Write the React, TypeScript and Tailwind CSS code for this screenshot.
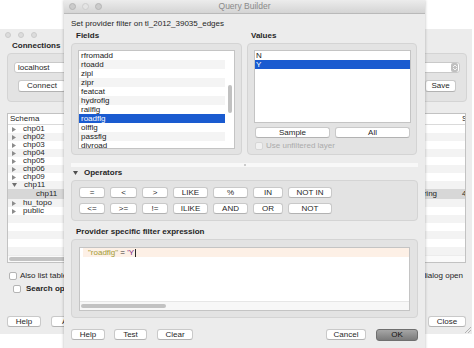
import type { ReactNode } from "react";

function Light({ tone }: { tone: "dark" | "light" | "bg" }) {
  const cls =
    tone === "dark"
      ? "w-[7px] h-[7px] rounded-full bg-[#cbcbcb] border border-[#b5b5b5]"
      : tone === "light"
      ? "w-[7px] h-[7px] rounded-full bg-[#e4e4e4] border border-[#cdcdcd]"
      : "w-[6px] h-[6px] rounded-full bg-[#dcdcdc] border border-[#cbcbcb]";
  return <div className={cls} />;
}

function Btn({ children, className = "" }: { children: ReactNode; className?: string }) {
  return (
    <div
      className={`h-[11px] shrink-0 flex items-center justify-center rounded-[3px] border border-[#c9c9c9] border-b-[#b2b2b2] bg-white text-[8px] leading-none text-[#1f1f1f] ${className}`}
    >
      {children}
    </div>
  );
}

function Check({ muted = false }: { muted?: boolean }) {
  return (
    <div
      className={`w-[8px] h-[8px] shrink-0 rounded-[2px] border ${
        muted ? "bg-[#f1f1f1] border-[#d6d6d6]" : "bg-white border-[#b4b4b4]"
      }`}
    />
  );
}

const fields = [
  "rfromadd",
  "rtoadd",
  "zipl",
  "zipr",
  "featcat",
  "hydroflg",
  "railflg",
  "roadflg",
  "olfflg",
  "passflg",
  "divroad",
];

const schemas = [
  { name: "chp01", arrow: "right" },
  { name: "chp02", arrow: "right" },
  { name: "chp03", arrow: "right" },
  { name: "chp04", arrow: "right" },
  { name: "chp05", arrow: "right" },
  { name: "chp06", arrow: "right" },
  { name: "chp09", arrow: "right" },
  { name: "chp11", arrow: "down" },
  { name: "chp11", arrow: "child" },
  { name: "hu_topo", arrow: "right" },
  { name: "public", arrow: "right" },
  { name: "", arrow: "none" },
  { name: "", arrow: "none" },
  { name: "", arrow: "none" },
  { name: "", arrow: "none" },
  { name: "", arrow: "none" },
];

const ops = [
  ["=", "<", ">", "LIKE", "%", "IN", "NOT IN"],
  ["<=", ">=", "!=", "ILIKE", "AND", "OR", "NOT"],
];

function Arrow({ dir }: { dir: string }) {
  if (dir === "right")
    return (
      <svg width="4" height="5" viewBox="0 0 4 5" className="shrink-0">
        <path d="M0 0 L4 2.5 L0 5 Z" fill="#8c8c8c" />
      </svg>
    );
  if (dir === "down")
    return (
      <svg width="5" height="4" viewBox="0 0 5 4" className="shrink-0">
        <path d="M0 0 L5 0 L2.5 4 Z" fill="#6f6f6f" />
      </svg>
    );
  return <div className="w-[4px] shrink-0" />;
}

function BackWindow() {
  return (
    <div className="absolute left-0 top-[29px] w-[472px] h-[305px] bg-[#ececec] flex flex-col">
      <div className="h-[12px] shrink-0 flex items-center gap-[7px] pl-[5px]">
        <Light tone="bg" />
        <Light tone="bg" />
        <Light tone="bg" />
      </div>
      <div className="h-[9px] pl-[12px] text-[8px] leading-[9px] font-bold text-[#262626]">Connections</div>

      <div className="mt-[3px] ml-[7px] mr-[5px] h-[49px] rounded-[4px] bg-[#e3e3e3] border border-[#d4d4d4] px-[6px] pt-[8px]">
        <div className="h-[11px] flex items-center rounded-[3px] bg-white border border-[#c9c9c9] pl-[3px] pr-[1px]">
          <span className="text-[8px] leading-none text-[#1f1f1f]">localhost</span>
          <div className="ml-auto w-[7px] h-[9px] rounded-[2px] bg-[#c0c0c0] flex flex-col items-center justify-center gap-[1px]">
            <svg width="4" height="2" viewBox="0 0 4 2">
              <path d="M0 2 L2 0 L4 2" stroke="#fff" strokeWidth="0.8" fill="none" />
            </svg>
            <svg width="4" height="2" viewBox="0 0 4 2">
              <path d="M0 0 L2 2 L4 0" stroke="#fff" strokeWidth="0.8" fill="none" />
            </svg>
          </div>
        </div>
        <div className="mt-[7px] flex justify-between pl-[4px] pr-[4px]">
          <Btn className="w-[48px] h-[12px]">Connect</Btn>
          <Btn className="w-[31px] h-[12px]">Save</Btn>
        </div>
      </div>

      <div className="mt-[11px] ml-[7px] mr-[6px] h-[150px] bg-white border border-[#c2c2c2] overflow-hidden flex flex-col">
        <div className="h-[11px] shrink-0 flex border-b border-[#dadada] text-[8px] leading-[10px] text-[#1f1f1f] whitespace-nowrap">
          <div className="w-[393px] shrink-0 pl-[2px]">Schema</div>
          <div className="w-[61px] shrink-0">Type</div>
          <div className="shrink-0">S</div>
        </div>
        <div className="flex-1 overflow-hidden">
          {schemas.map((s, i) => {
            const child = s.arrow === "child";
            return (
              <div
                key={i}
                className={`flex items-center whitespace-nowrap text-[8px] text-[#1f1f1f] ${
                  child ? "h-[10px] bg-[#d7d7d7]" : i % 2 ? "h-[8px] bg-[#f3f3f3]" : "h-[8px]"
                }`}
              >
                <div className={`w-[393px] shrink-0 flex items-center ${child ? "pl-[21px]" : "pl-[4px]"}`}>
                  {!child && s.arrow !== "none" && <Arrow dir={s.arrow} />}
                  <span className="ml-[7px] leading-none">{s.name}</span>
                </div>
                {child && (
                  <>
                    <div className="w-[61px] shrink-0 leading-none">LineString</div>
                    <div className="shrink-0 leading-none">4</div>
                  </>
                )}
              </div>
            );
          })}
        </div>
        <div className="h-[7px] shrink-0 bg-[#fafafa] border-t border-[#ececec] flex items-center px-[1px]">
          <div className="h-[4px] w-[300px] rounded-full bg-[#c3c3c3]" />
        </div>
      </div>

      <div className="mt-[8px] ml-[7px] mr-[6px] h-[9px] flex items-center justify-between text-[8px] leading-none text-[#1f1f1f] whitespace-nowrap">
        <div className="flex items-center pl-[2px] gap-[3px]">
          <Check />
          <span>Also list tables with no geometry</span>
        </div>
        <div className="flex items-center gap-[3px] pr-[3px]">
          <Check />
          <span>Keep dialog open</span>
        </div>
      </div>
      <div className="mt-[4px] ml-[13px] h-[9px] flex items-center gap-[5px] text-[8px] leading-none font-bold text-[#1f1f1f]">
        <Check />
        <span>Search options</span>
      </div>

      <div className="mt-[23px] ml-[7px] mr-[6px] flex">
        <Btn className="w-[34px]">Help</Btn>
        <Btn className="w-[36px] ml-[10px]">Add</Btn>
        <Btn className="w-[38px] ml-auto">Close</Btn>
      </div>

      <svg width="7" height="7" viewBox="0 0 7 7" className="absolute right-[1px] bottom-[1px]">
        <path d="M1 7 L7 1 M4 7 L7 4" stroke="#9a9a9a" strokeWidth="0.7" />
      </svg>
    </div>
  );
}

function QueryBuilder() {
  return (
    <div className="absolute left-[64px] top-0 w-[361px] h-[360px] bg-[#ececec] shadow-[0_0_3px_rgba(0,0,0,0.28)] flex flex-col">
      <div className="relative h-[14px] shrink-0 bg-gradient-to-b from-[#ececec] to-[#d4d4d4] border-b border-[#b9b9b9] flex items-center gap-[6px] pl-[5px]">
        <Light tone="dark" />
        <Light tone="light" />
        <Light tone="dark" />
        <div className="absolute inset-0 flex items-center justify-center text-[8.5px] leading-none text-[#8a8a8a]">
          Query Builder
        </div>
      </div>

      <div className="flex flex-col px-[7px]">
        <div className="mt-[5px] h-[9px] text-[8px] leading-[9px] text-[#1f1f1f]">
          Set provider filter on tl_2012_39035_edges
        </div>

        <div className="mt-[3px] flex">
          <div className="w-[171px] flex flex-col">
            <div className="h-[9px] pl-[5px] text-[8px] leading-[9px] font-bold text-[#262626]">Fields</div>
            <div className="mt-[3px] h-[112px] rounded-[4px] bg-[#e3e3e3] border border-[#d4d4d4] pl-[6px] pr-[6px] pt-[6px]">
              <div className="relative h-[99px] bg-white border border-[#c4c4c4] overflow-hidden">
                <div className="mr-[9px]">
                  {fields.map((f, i) => (
                    <div
                      key={f}
                      className={`h-[9px] pl-[2px] text-[8px] leading-[9px] ${
                        f === "roadflg"
                          ? "bg-[#1a5bd0] text-white"
                          : i % 2
                          ? "bg-[#f4f4f4] text-[#1a1a1a]"
                          : "text-[#1a1a1a]"
                      }`}
                    >
                      {f}
                    </div>
                  ))}
                </div>
                <div className="absolute right-[2px] top-[34px] w-[4px] h-[28px] rounded-full bg-[#c1c1c1]" />
              </div>
            </div>
          </div>

          <div className="ml-[5px] w-[170px] flex flex-col">
            <div className="h-[9px] pl-[4px] text-[8px] leading-[9px] font-bold text-[#262626]">Values</div>
            <div className="mt-[3px] h-[112px] rounded-[4px] bg-[#e3e3e3] border border-[#d4d4d4] pl-[6px] pr-[5px] pt-[6px]">
              <div className="h-[73px] bg-white border border-[#c4c4c4] overflow-hidden">
                <div className="h-[9px] pl-[1px] text-[8px] leading-[9px] text-[#1a1a1a]">N</div>
                <div className="h-[9px] pl-[1px] text-[8px] leading-[9px] bg-[#1a5bd0] text-white">Y</div>
              </div>
              <div className="mt-[4px] flex gap-[5px] pl-[1px]">
                <Btn className="w-[75px]">Sample</Btn>
                <Btn className="w-[75px]">All</Btn>
              </div>
              <div className="mt-[4px] pl-[1px] h-[8px] flex items-center gap-[3px] text-[8px] leading-none text-[#ababab]">
                <Check muted />
                <span>Use unfiltered layer</span>
              </div>
            </div>
          </div>
        </div>

        <div className="mt-[8px] h-[4px] bg-[#f8f8f8] flex items-center justify-center">
          <div className="w-[2px] h-[2px] rounded-full bg-[#bdbdbd]" />
        </div>

        <div className="mt-[1px] h-[9px] flex items-center pl-[2px] gap-[6px]">
          <svg width="5" height="4" viewBox="0 0 5 4">
            <path d="M0 0 L5 0 L2.5 4 Z" fill="#4f4f4f" />
          </svg>
          <span className="text-[8px] leading-none font-bold text-[#262626]">Operators</span>
        </div>
        <div className="mt-[3px] h-[41px] rounded-[4px] bg-[#e3e3e3] border border-[#d4d4d4] pl-[7px] pt-[6px]">
          <div className="grid grid-cols-[26px_27px_26px_35px_35px_30px_44px] gap-[5px]">
            {ops.flat().map((o, i) => (
              <Btn key={i}>{o}</Btn>
            ))}
          </div>
        </div>

        <div className="mt-[6px] h-[9px] pl-[5px] text-[8px] leading-[9px] font-bold text-[#262626]">
          Provider specific filter expression
        </div>
        <div className="mt-[3px] h-[79px] rounded-[4px] bg-[#e3e3e3] border border-[#d4d4d4] px-[7px] pt-[7px]">
          <div className="h-[64px] bg-white border border-[#c4c4c4] flex flex-col">
            <div className="ml-[3px] h-[9px] bg-[#fdf0e6] flex items-center pl-[5px] text-[8px] leading-none whitespace-pre">
              <span className="text-[#a39b35]">"roadflg"</span>
              <span className="text-[#333]"> = </span>
              <span className="text-[#7f1f7f]">'Y</span>
              <span className="ml-[1px] w-[1px] h-[8px] bg-[#2a2a2a]" />
            </div>
            <div className="flex-1" />
            <div className="h-[9px] bg-[#f7f7f7] border-t border-[#e6e6e6] flex items-center px-[1px]">
              <div className="h-[4px] w-[85px] rounded-full bg-[#c2c2c2]" />
            </div>
          </div>
        </div>

        <div className="mt-[11px] flex">
          <Btn className="w-[34px]">Help</Btn>
          <Btn className="w-[33px] ml-[9px]">Test</Btn>
          <Btn className="w-[36px] ml-[10px]">Clear</Btn>
          <Btn className="w-[40px] ml-auto">Cancel</Btn>
          <div className="w-[42px] ml-[10px] h-[12px] flex items-center justify-center rounded-[3px] bg-gradient-to-b from-[#a6a6a6] to-[#7b7b7b] border border-[#6f6f6f] text-[8px] leading-none text-[#111]">
            OK
          </div>
        </div>
      </div>
    </div>
  );
}

export default function App() {
  return (
    <div className="relative w-[474px] h-[348px] overflow-hidden bg-white font-['Liberation_Sans',Arial,sans-serif]">
      <BackWindow />
      <QueryBuilder />
    </div>
  );
}
